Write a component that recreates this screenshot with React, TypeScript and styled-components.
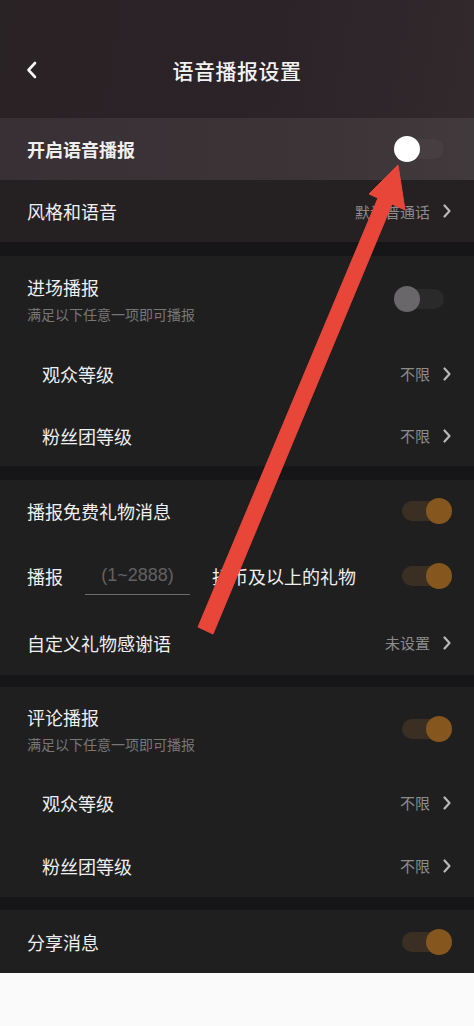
import React from 'react';
import styled, { createGlobalStyle } from 'styled-components';

const GlobalStyle = createGlobalStyle`
  html, body {
    margin: 0;
    padding: 0;
    background: #fafafa;
  }
  * {
    box-sizing: border-box;
  }
`;

type Level = { label: string; value: string };

const levels: Level[] = [
  { label: '观众等级', value: '不限' },
  { label: '粉丝团等级', value: '不限' },
];

const Chevron: React.FC<{ left?: boolean }> = ({ left }) => (
  <svg width={left ? 14 : 10} height={left ? 20 : 16} viewBox={left ? '0 0 14 20' : '0 0 10 16'}>
    {left ? (
      <path d="M10 3 L3.5 10 L10 17" fill="none" stroke="#f4f4f4" strokeWidth={2.6} strokeLinecap="round" strokeLinejoin="round" />
    ) : (
      <path d="M2.5 2.5 L7.5 8 L2.5 13.5" fill="none" stroke="#b8b8b8" strokeWidth={2.2} strokeLinecap="round" strokeLinejoin="round" />
    )}
  </svg>
);

const Toggle: React.FC<{ on?: boolean; tone?: 'light' | 'dim' }> = ({ on, tone = 'dim' }) => (
  <Switch>
    <Track $on={on} $tone={tone} />
    <Knob $on={on} $tone={tone} />
  </Switch>
);

const App: React.FC = () => {
  return (
    <Page>
      <GlobalStyle />
      <Screen>
        <Hero>
          <Header>
            <BackButton>
              <Chevron left />
            </BackButton>
            <Title>语音播报设置</Title>
            <span />
          </Header>
          <Row $h={62} $bg="linear-gradient(90deg, #383034 0%, #3b3336 60%, #413a3d 100%)">
            <Label $bold>开启语音播报</Label>
            <Toggle tone="light" />
          </Row>
          <Row $h={62} $bg="#252022">
            <Label>风格和语音</Label>
            <Value>
              默认普通话
              <Chevron />
            </Value>
          </Row>
        </Hero>

        <Section $top={14}>
          <Row $h={86}>
            <HeadText>
              <Label>进场播报</Label>
              <Hint>满足以下任意一项即可播报</Hint>
            </HeadText>
            <Toggle />
          </Row>
          {levels.map((l, i) => (
            <Row key={'in' + l.label} $h={i === 0 ? 63 : 61} $indent>
              <Label>{l.label}</Label>
              <Value>
                {l.value}
                <Chevron />
              </Value>
            </Row>
          ))}
        </Section>

        <Section $top={14}>
          <Row $h={62}>
            <Label>播报免费礼物消息</Label>
            <Toggle on />
          </Row>
          <Row $h={68}>
            <GiftLine>
              <Label>播报</Label>
              <RangeInput placeholder="(1~2888)" />
              <Label>抖币及以上的礼物</Label>
            </GiftLine>
            <Toggle on />
          </Row>
          <Row $h={65}>
            <Label>自定义礼物感谢语</Label>
            <Value>
              未设置
              <Chevron />
            </Value>
          </Row>
        </Section>

        <Section $top={12}>
          <Row $h={84}>
            <HeadText>
              <Label>评论播报</Label>
              <Hint>满足以下任意一项即可播报</Hint>
            </HeadText>
            <Toggle on />
          </Row>
          {levels.map(l => (
            <Row key={'cm' + l.label} $h={63} $indent>
              <Label>{l.label}</Label>
              <Value>
                {l.value}
                <Chevron />
              </Value>
            </Row>
          ))}
        </Section>

        <Section $top={13}>
          <Row $h={63}>
            <Label>分享消息</Label>
            <Toggle on />
          </Row>
        </Section>
      </Screen>

      {/* red annotation arrow drawn over the screenshot */}
      <Annotation viewBox="0 0 474 1026" width={474} height={1026}>
        <polygon
          points="198,627 378,198 369,194 398,165 405,210 392,204 213,634"
          fill="#e9463a"
          stroke="#e9463a"
          strokeWidth={1}
          strokeLinejoin="round"
        />
      </Annotation>
    </Page>
  );
};

const Page = styled.div`
  position: relative;
  width: 474px;
  min-height: 1026px;
  background: #fafafa;
  font-family: "Noto Sans CJK SC", "Noto Sans", sans-serif;
  overflow: hidden;
`;

const Screen = styled.div`
  display: flex;
  flex-direction: column;
  background: #161517;
`;

const Hero = styled.div`
  display: flex;
  flex-direction: column;
  background: linear-gradient(100deg, #2a2326 0%, #2b2327 55%, #322b2e 100%);
`;

const Header = styled.header`
  display: grid;
  grid-template-columns: 60px 1fr 60px;
  align-items: center;
  height: 118px;
  padding-top: 22px;
`;

const BackButton = styled.button`
  display: flex;
  align-items: center;
  justify-content: flex-start;
  padding: 0 0 0 25px;
  background: none;
  border: none;
`;

const Title = styled.h1`
  margin: 0;
  text-align: center;
  color: #f2f2f2;
  font-size: 21px;
  font-weight: 500;
  letter-spacing: 0.5px;
`;

const Section = styled.section<{ $top: number }>`
  display: flex;
  flex-direction: column;
  margin-top: ${p => p.$top}px;
  background: #1f1f20;
`;

const Row = styled.div<{ $h: number; $indent?: boolean; $bg?: string }>`
  display: flex;
  align-items: center;
  justify-content: space-between;
  height: ${p => p.$h}px;
  padding: 0 22px 0 ${p => (p.$indent ? 42 : 27)}px;
  background: ${p => p.$bg || 'transparent'};
`;

const HeadText = styled.div`
  display: flex;
  flex-direction: column;
  gap: 5px;
`;

const Label = styled.span<{ $bold?: boolean }>`
  color: #efefef;
  font-size: 18px;
  font-weight: ${p => (p.$bold ? 700 : 400)};
  line-height: 24px;
  white-space: nowrap;
`;

const Hint = styled.span`
  color: #767676;
  font-size: 14px;
  line-height: 20px;
`;

const Value = styled.span`
  display: flex;
  align-items: center;
  gap: 12px;
  color: #8c8c8c;
  font-size: 15px;
`;

const GiftLine = styled.div`
  display: flex;
  align-items: center;
  gap: 22px;
`;

const RangeInput = styled.input`
  width: 105px;
  height: 34px;
  margin-top: 4px;
  padding: 0 0 4px;
  background: transparent;
  border: none;
  border-bottom: 1.5px solid #6b6b6b;
  color: #eee;
  font-family: "Liberation Sans", sans-serif;
  font-size: 18px;
  text-align: center;
  outline: none;

  &::placeholder {
    color: #626262;
  }
`;

const Switch = styled.div`
  position: relative;
  width: 58px;
  height: 26px;
  flex-shrink: 0;
`;

const Track = styled.div<{ $on?: boolean; $tone: string }>`
  position: absolute;
  left: 8px;
  right: 8px;
  top: 3px;
  height: 20px;
  border-radius: 10px;
  background: ${p => (p.$on ? '#3a2f22' : p.$tone === 'light' ? '#463e41' : '#2a2a2b')};
`;

const Knob = styled.div<{ $on?: boolean; $tone: string }>`
  position: absolute;
  top: 0;
  ${p => (p.$on ? 'right: 0;' : 'left: 0;')}
  width: 26px;
  height: 26px;
  border-radius: 50%;
  background: ${p => (p.$on ? '#85571f' : p.$tone === 'light' ? '#ffffff' : '#6a676a')};
`;

const Annotation = styled.svg`
  position: absolute;
  left: 0;
  top: 0;
  pointer-events: none;
`;

export default App;
